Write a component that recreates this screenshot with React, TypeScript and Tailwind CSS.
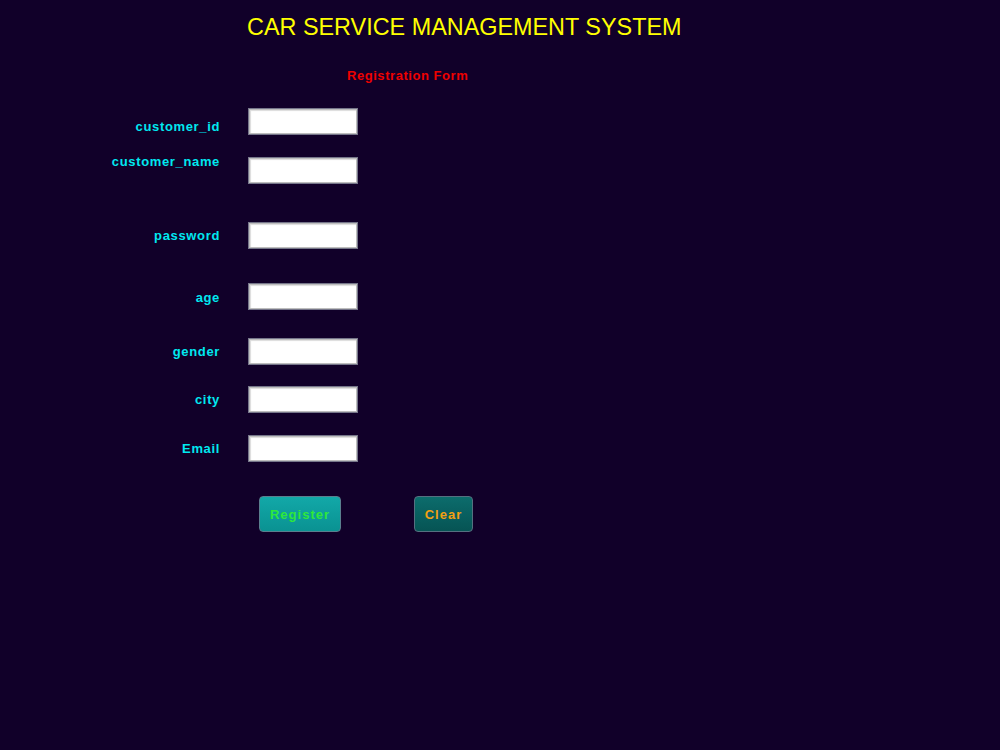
import React from "react";

const font = { fontFamily: '"Liberation Sans", Arial, sans-serif' };

type Row = { label: string; h: number; labelMt: number; inputMt: number };

const rows: Row[] = [
  { label: "customer_id", h: 46, labelMt: 11, inputMt: 0 },
  { label: "customer_name", h: 68, labelMt: 0, inputMt: 3 },
  { label: "password", h: 61, labelMt: 6, inputMt: 0 },
  { label: "age", h: 55, labelMt: 7, inputMt: 0 },
  { label: "gender", h: 48, labelMt: 6, inputMt: 0 },
  { label: "city", h: 49, labelMt: 6, inputMt: 0 },
  { label: "Email", h: 61, labelMt: 6, inputMt: 0 },
];

const mtLabel: Record<number, string> = {
  0: "mt-0",
  6: "mt-[6px]",
  7: "mt-[7px]",
  11: "mt-[11px]",
};
const mtInput: Record<number, string> = { 0: "mt-0", 3: "mt-[3px]" };
const hRow: Record<number, string> = {
  46: "h-[46px]",
  68: "h-[68px]",
  61: "h-[61px]",
  55: "h-[55px]",
  48: "h-[48px]",
  49: "h-[49px]",
};

export default function App() {
  return (
    <div className="w-[1000px] h-[750px] bg-[#110029] overflow-hidden" style={font}>
      <div className="pt-[13px] pl-[247px] h-[41px] text-[23.4px] leading-[28px] text-[#ffff00]">
        CAR SERVICE MANAGEMENT SYSTEM
      </div>
      <div className="mt-[27px] pl-[347px] h-[16px] text-[13px] leading-[16px] font-bold tracking-[0.55px] text-[#ee0000]">
        Registration Form
      </div>
      <div className="mt-[24px] flex flex-col">
        {rows.map((r) => (
          <div key={r.label} className={`flex items-start ${hRow[r.h]}`}>
            <div
              className={`w-[220px] text-right text-[13px] leading-[16px] font-bold tracking-[0.65px] text-[#00e8f0] ${mtLabel[r.labelMt]}`}
            >
              {r.label}
            </div>
            <input
              className={`ml-[28px] w-[110px] h-[27px] bg-white border border-[#76768a] shadow-[inset_0_0_0_1px_#bdbdbd,inset_1px_1px_1px_1px_#dcdcdc] outline-none ${mtInput[r.inputMt]}`}
            />
          </div>
        ))}
      </div>
      <div className="flex pl-[259px]">
        <button className="w-[82px] h-[36px] pt-[1px] rounded-[4px] border border-[#5a7f8e] bg-gradient-to-b from-[#12a8a8] to-[#0a9292] text-[13px] font-bold tracking-[1px] text-[#2ee83a]">
          Register
        </button>
        <button className="ml-[73px] w-[59px] h-[36px] pt-[1px] rounded-[4px] border border-[#557080] bg-gradient-to-b from-[#0c6c6c] to-[#065454] text-[13px] font-bold tracking-[1px] text-[#f2a012]">
          Clear
        </button>
      </div>
    </div>
  );
}
